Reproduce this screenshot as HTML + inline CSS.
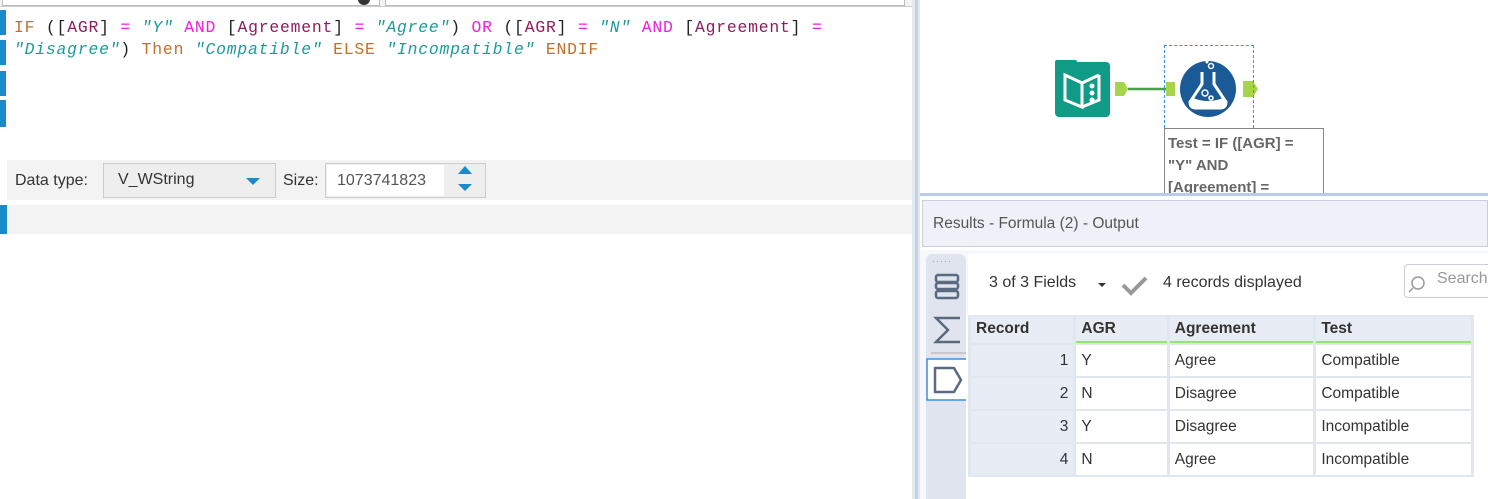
<!DOCTYPE html>
<html><head><meta charset="utf-8"><style>
*{margin:0;padding:0;box-sizing:border-box}
body{width:1488px;height:499px;overflow:hidden;background:#fff;position:relative;font-family:"Liberation Sans",sans-serif}
.a{position:absolute}
.code{font-family:"Liberation Mono",monospace;font-size:16.4px;letter-spacing:0.8px;line-height:22px;white-space:pre;color:#222}
.k{color:#c0702a}.f{color:#8e1d5a}.o{color:#f020e0}.s{color:#1f9a9a;font-style:italic}
.t{font-size:16px;color:#333}
table{border-collapse:separate;border-spacing:3px 2px;font-size:15.5px;color:#333;table-layout:fixed}
td{background:#fff;height:31px;padding:0 5px}
th{background:#e8ecf4;text-align:left;height:26px;padding:0 5px;font-weight:bold;border-bottom:2px solid #8ee86a}
td.r{background:#e8ecf4;text-align:right}
</style></head><body>
<div class="a" style="left:0;top:0;width:912px;height:7px;background:#f3f3f3;border-bottom:1px solid #ccc"></div>
<div class="a" style="left:2px;top:0;width:378px;height:6px;background:#fff;border:1px solid #bbb;border-top:none"></div>
<div class="a" style="left:358px;top:-6px;width:12px;height:11px;border-radius:50%;background:#333"></div>
<div class="a" style="left:385px;top:0;width:520px;height:6px;background:#fff;border:1px solid #bbb;border-top:none"></div>
<div class="a" style="left:0;top:10px;width:6px;height:25px;background:#1a8ac8"></div>
<div class="a" style="left:0;top:40px;width:6px;height:25px;background:#1a8ac8"></div>
<div class="a" style="left:0;top:71px;width:6px;height:25px;background:#1a8ac8"></div>
<div class="a" style="left:0;top:100px;width:6px;height:27px;background:#1a8ac8"></div>
<div class="code a" style="left:14px;top:17px"><span class="k">IF</span> ([<span class="f">AGR</span>] <span class="o">=</span> <span class="s">"Y"</span> <span class="o">AND</span> [<span class="f">Agreement</span>] <span class="o">=</span> <span class="s">"Agree"</span>) <span class="o">OR</span> ([<span class="f">AGR</span>] <span class="o">=</span> <span class="s">"N"</span> <span class="o">AND</span> [<span class="f">Agreement</span>] <span class="o">=</span>
<span class="s">"Disagree"</span>) <span class="k">Then</span> <span class="s">"Compatible"</span> <span class="k">ELSE</span> <span class="s">"Incompatible"</span> <span class="k">ENDIF</span></div>
<div class="a" style="left:7px;top:160px;width:905px;height:40px;background:#f3f3f3"></div>
<div class="a t" style="left:15px;top:172px">Data type:</div>
<div class="a" style="left:103px;top:163px;width:173px;height:35px;background:#eee;border:1px solid #ccc"></div>
<div class="a t" style="left:118px;top:171px">V_WString</div>
<div class="a" style="left:246px;top:178px;width:0;height:0;border-left:7px solid transparent;border-right:7px solid transparent;border-top:7px solid #1a8ac8"></div>
<div class="a t" style="left:283px;top:172px">Size:</div>
<div class="a" style="left:325px;top:163px;width:161px;height:35px;background:#eee;border:1px solid #ccc"></div>
<div class="a" style="left:327px;top:165px;width:117px;height:31px;background:#fff"></div>
<div class="a t" style="left:337px;top:172px;color:#555">1073741823</div>
<div class="a" style="left:458px;top:166px;width:0;height:0;border-left:7px solid transparent;border-right:7px solid transparent;border-bottom:8px solid #1a8ac8"></div>
<div class="a" style="left:458px;top:184px;width:0;height:0;border-left:7px solid transparent;border-right:7px solid transparent;border-top:7px solid #1a8ac8"></div>
<div class="a" style="left:0;top:205px;width:912px;height:29px;background:#f3f3f3"></div>
<div class="a" style="left:0;top:205px;width:7px;height:29px;background:#1a8ac8"></div>
<div class="a" style="left:912px;top:0;width:8px;height:499px;background:#e4e8ef"></div>
<div class="a" style="left:915px;top:0;width:3px;height:499px;background:#c4d2ea"></div>
<svg class="a" style="left:1040px;top:50px" width="230" height="80" viewBox="0 0 230 80">
<rect x="15" y="12" width="55" height="55" rx="4" fill="#0f9b85"/>
<rect x="15" y="10" width="22" height="6" rx="2" fill="#0f9b85"/>
<path d="M25 25 L42 33 L42 57 L25 50 Z M59 25 L42 33 M42 57 L59 50 L59 25" fill="none" stroke="#fff" stroke-width="3"/>
<circle cx="52" cy="36" r="2.5" fill="#fff"/><circle cx="52" cy="43" r="2.5" fill="#fff"/><circle cx="52" cy="50" r="2.5" fill="#fff"/>
<path d="M75 32 H84 L88 39 L84 46 H75 Z" fill="#a8d44a"/>
<line x1="88" y1="39" x2="128" y2="39" stroke="#4aa04a" stroke-width="2.5"/>
<rect x="126" y="32" width="9" height="14" fill="#a8d44a"/>
<circle cx="168" cy="39" r="28" fill="#1a5a96"/>
<path d="M162 22 V34 L150 52 Q150 58 156 58 H180 Q186 58 186 52 L174 34 V22" fill="none" stroke="#fff" stroke-width="3"/>
<path d="M153 48 Q168 54 183 48 L186 53 Q186 58 180 58 H156 Q150 58 150 53 Z" fill="#fff"/>
<circle cx="165" cy="43" r="3" fill="none" stroke="#fff" stroke-width="1.5"/><circle cx="171" cy="48" r="2" fill="none" stroke="#fff" stroke-width="1.5"/>
<circle cx="171" cy="16" r="2.5" fill="none" stroke="#fff" stroke-width="1.5"/><circle cx="167" cy="12" r="1.5" fill="#fff"/>
<path d="M203 31 H213 L218 39 L213 47 H203 Z" fill="#a8d44a"/>
</svg>
<div class="a" style="left:1164px;top:45px;width:90px;height:83px;border:1px dashed #3a8ee6;border-bottom:none"></div>
<div class="a" style="left:1164px;top:128px;width:160px;height:66px;border:1px solid #888;border-bottom:none;background:#fff;overflow:hidden;font-size:15px;line-height:22px;color:#666;padding:4px 3px;font-weight:bold">Test = IF ([AGR] =<br>"Y" AND<br>[Agreement] =</div>
<div class="a" style="left:920px;top:193px;width:568px;height:3px;background:#b8cbe8"></div>
<div class="a" style="left:922px;top:200px;width:566px;height:47px;background:#eef1f8;border:1px solid #c8d0de"></div>
<div class="a t" style="left:933px;top:215px;color:#555;font-size:15.5px">Results - Formula (2) - Output</div>
<div class="a" style="left:920px;top:250px;width:568px;height:249px;background:#f7f8fb"></div>
<div class="a" style="left:926px;top:254px;width:40px;height:245px;background:#dfe4ee;border-radius:6px 6px 0 0"></div>
<div class="a" style="left:932px;top:256px;font-size:9px;color:#999;letter-spacing:1px">·····</div>
<svg class="a" style="left:926px;top:270px" width="44" height="135">
<rect x="10" y="5" width="22" height="7" rx="2" fill="none" stroke="#5a6a80" stroke-width="2.5"/>
<rect x="10" y="13" width="22" height="6" rx="2" fill="none" stroke="#5a6a80" stroke-width="2.5"/>
<rect x="10" y="21" width="22" height="7" rx="2" fill="none" stroke="#5a6a80" stroke-width="2.5"/>
<path d="M34 48 H10 L22 60 L10 72 H34" fill="none" stroke="#5a6a80" stroke-width="2.5"/>
<line x1="5" y1="83" x2="40" y2="83" stroke="#aab" stroke-width="1"/>
<rect x="1" y="89" width="41" height="41" fill="#fff" stroke="#3a8ee6" stroke-width="1.5"/>
<path d="M9 98 H28 L35 110 L28 122 H9 Z" fill="none" stroke="#5a6a80" stroke-width="2.5" stroke-linejoin="round"/>
</svg>
<div class="a" style="left:968px;top:254px;width:520px;height:62px;background:#fff"></div>
<div class="a t" style="left:989px;top:274px">3 of 3 Fields</div>
<div class="a" style="left:1098px;top:283px;border-left:4px solid transparent;border-right:4px solid transparent;border-top:4px solid #333"></div>
<svg class="a" style="left:1120px;top:274px" width="30" height="22"><path d="M3 11 L11 19 L26 4" fill="none" stroke="#999" stroke-width="4"/></svg>
<div class="a t" style="left:1163px;top:274px">4 records displayed</div>
<div class="a" style="left:1404px;top:264px;width:90px;height:34px;border:1px solid #ccd;border-radius:4px;background:#fff"></div>
<svg class="a" style="left:1408px;top:274px" width="20" height="20"><circle cx="10" cy="9" r="6" fill="none" stroke="#999" stroke-width="1.5"/><line x1="5" y1="14" x2="1" y2="18" stroke="#999" stroke-width="1.5"/></svg>
<div class="a t" style="left:1437px;top:270px;color:#999">Search</div>
<div class="a" style="left:966px;top:316px;width:522px;height:183px;background:#fff"></div>
<table class="a" style="left:968px;top:315px;background:#e2e6ee;width:506px">
<colgroup><col style="width:102px"><col style="width:90px"><col style="width:143px"><col style="width:154px"></colgroup>
<tr><th style="border-bottom-color:#e8ecf4">Record</th><th>AGR</th><th>Agreement</th><th>Test</th></tr>
<tr><td class="r">1</td><td>Y</td><td>Agree</td><td>Compatible</td></tr>
<tr><td class="r">2</td><td>N</td><td>Disagree</td><td>Compatible</td></tr>
<tr><td class="r">3</td><td>Y</td><td>Disagree</td><td>Incompatible</td></tr>
<tr><td class="r">4</td><td>N</td><td>Agree</td><td>Incompatible</td></tr>
</table>
</body></html>
